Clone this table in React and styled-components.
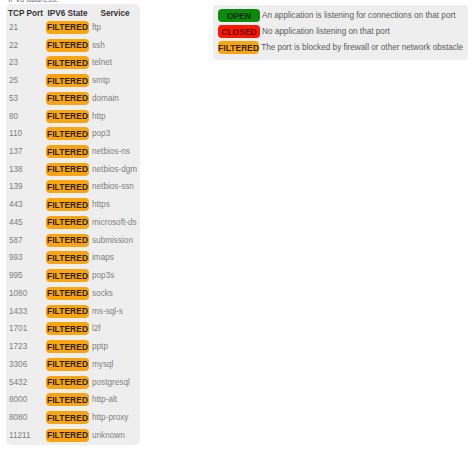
import React from "react";
import styled, { createGlobalStyle } from "styled-components";

const Global = createGlobalStyle`
  html, body { margin: 0; padding: 0; background: #ffffff; }
  body { font-family: "Liberation Sans", Arial, sans-serif; font-size: 8.2px; color: #555; }
`;

const Page = styled.div`
  margin-top: -5px;
  padding-left: 6px;
`;

const Caption = styled.div`
  padding-left: 2px;
  height: 9px;
  line-height: 9px;
  color: #777;
  font-size: 8.2px;
  overflow: hidden;
`;

const Columns = styled.div`
  display: flex;
  align-items: flex-start;
  gap: 73px;
`;

const TablePanel = styled.div`
  width: 134px;
  background: #eeeeee;
  border-radius: 5px;
  padding-bottom: 1px;
  display: grid;
  grid-template-columns: 39px 45px 50px;
  grid-template-rows: 14.5px;
  grid-auto-rows: 17.74px;
`;

const Head = styled.div`
  padding-top: 2px;
  line-height: 15px;
  font-weight: bold;
  color: #333;
  text-align: center;
  white-space: nowrap;
`;

const Port = styled.div`
  display: flex;
  align-items: center;
  padding-left: 3px;
  color: #808080;
`;

const StateCell = styled.div`
  display: flex;
  align-items: center;
  padding-left: 1px;
`;

const Service = styled.div`
  display: flex;
  align-items: center;
  padding-left: 2px;
  color: #808080;
  white-space: nowrap;
`;

const colors = {
  OPEN: { bg: "#0b8a0b", fg: "#0b2a0b" },
  CLOSED: { bg: "#ff1500", fg: "#5a0000" },
  FILTERED: { bg: "#f9a512", fg: "#2e1f00" },
};

const Badge = styled.span`
  display: inline-flex;
  align-items: center;
  justify-content: center;
  width: ${(p) => p.$w}px;
  height: ${(p) => p.$h}px;
  border-radius: 4px;
  background: ${(p) => colors[p.$state].bg};
  color: ${(p) => colors[p.$state].fg};
  font-weight: bold;
  font-size: 8.4px;
  letter-spacing: 0.1px;
  box-sizing: border-box;
`;

const Legend = styled.div`
  margin-top: 1px;
  width: 255px;
  box-sizing: border-box;
  background: #eeeeee;
  border-radius: 4px;
  padding: 4px 5px 6px;
  display: flex;
  flex-direction: column;
  gap: 3px;
`;

const LegendRow = styled.div`
  display: flex;
  align-items: center;
  gap: 2px;
  height: 13px;
  color: #5a5a5a;
  white-space: nowrap;
`;

const rows = [
  [21, "ftp"],
  [22, "ssh"],
  [23, "telnet"],
  [25, "smtp"],
  [53, "domain"],
  [80, "http"],
  [110, "pop3"],
  [137, "netbios-ns"],
  [138, "netbios-dgm"],
  [139, "netbios-ssn"],
  [443, "https"],
  [445, "microsoft-ds"],
  [587, "submission"],
  [993, "imaps"],
  [995, "pop3s"],
  [1080, "socks"],
  [1433, "ms-sql-s"],
  [1701, "l2f"],
  [1723, "pptp"],
  [3306, "mysql"],
  [5432, "postgresql"],
  [8000, "http-alt"],
  [8080, "http-proxy"],
  [11211, "unknown"],
];

const legend = [
  ["OPEN", "An application is listening for connections on that port"],
  ["CLOSED", "No application listening on that port"],
  ["FILTERED", "The port is blocked by firewall or other network obstacle"],
];

export default function App() {
  return (
    <>
      <Global />
      <Page>
        <Caption>IPv6 address:</Caption>
        <Columns>
          <TablePanel>
            <Head>TCP Port</Head>
            <Head>IPV6 State</Head>
            <Head>Service</Head>
            {rows.map(([port, svc]) => (
              <React.Fragment key={port}>
                <Port>{port}</Port>
                <StateCell>
                  <Badge $state="FILTERED" $w={43} $h={13}>FILTERED</Badge>
                </StateCell>
                <Service>{svc}</Service>
              </React.Fragment>
            ))}
          </TablePanel>
          <Legend>
            {legend.map(([s, t]) => (
              <LegendRow key={s}>
                <Badge $state={s} $w={42} $h={13}>{s}</Badge>
                {t}
              </LegendRow>
            ))}
          </Legend>
        </Columns>
      </Page>
    </>
  );
}
